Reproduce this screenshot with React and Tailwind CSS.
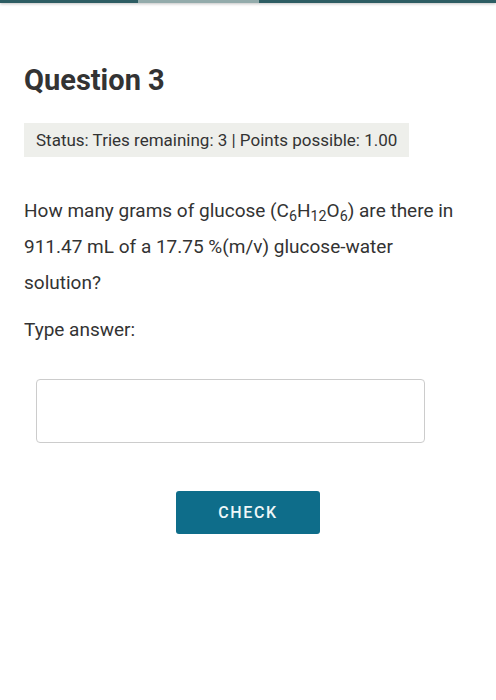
export default function App() {
  return (
    <div className="min-h-screen w-full bg-white font-['Roboto',sans-serif] text-[#333333]">
      {/* top bar */}
      <div className="flex h-[3px] w-full bg-[#2d5d63] shadow-[0_1px_3px_rgba(0,0,0,0.25)]">
        <div className="ml-[138px] h-[3px] w-[121px] bg-[#93abab]" />
      </div>

      <div className="px-6 pt-[57px]">
        <h1 className="text-[29px] font-bold leading-[40px]">Question 3</h1>

        <div className="mt-[23px] inline-block bg-[#eeefeb] px-3 py-[6px] text-[17px] leading-[22px]">
          Status: Tries remaining: 3 | Points possible: 1.00
        </div>

        <p className="mt-[36px] text-[19px] leading-[36px]">
          How many grams of glucose (C<sub className="leading-none">6</sub>H<sub className="leading-none">12</sub>O
          <sub className="leading-none">6</sub>) are there in 911.47 mL of a 17.75 %(m/v) glucose-water solution?
        </p>

        <p className="mt-[14px] text-[19px] leading-[30px]">Type answer:</p>

        <div className="px-3 pt-[34px]">
          <input type="text" className="h-[64px] w-[389px] rounded-[4px] border border-[#cccccc] bg-white" />
        </div>

        <div className="flex justify-center pt-[48px]">
          <button className="h-[43px] w-[144px] rounded-[3px] bg-[#0e6d8a] text-[16px] font-medium tracking-[1.6px] text-[#eef7f8]">
            CHECK
          </button>
        </div>
      </div>
    </div>
  );
}
